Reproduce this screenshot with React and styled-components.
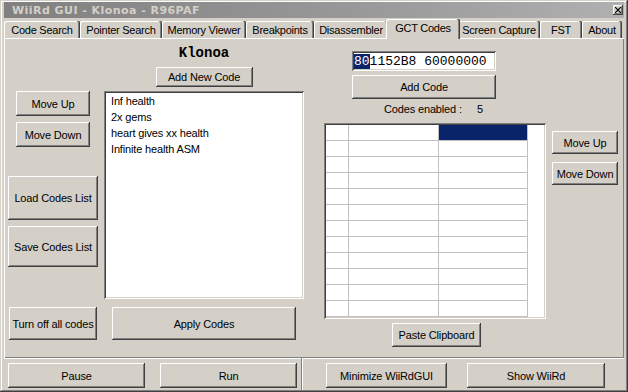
import React from 'react';
import styled, { createGlobalStyle } from 'styled-components';

const Global = createGlobalStyle`
  html, body { margin: 0; padding: 0; background: #d4d0c8; }
  body { font-family: "Liberation Sans", Arial, sans-serif; font-size: 11px; color: #000; }
  * { box-sizing: border-box; }
`;

const raised = `box-shadow: inset -1px -1px #404040, inset 1px 1px #ffffff, inset -2px -2px #808080;`;
const sunken = `box-shadow: inset 1px 1px #808080, inset -1px -1px #ffffff, inset 2px 2px #404040, inset -2px -2px #d4d0c8;`;

const Window = styled.div`
  width: 628px;
  height: 392px;
  padding: 2px 4px 2px 4px;
  background: #d4d0c8;
  display: flex;
  flex-direction: column;
  box-shadow: inset -1px -1px #404040, inset 1px 1px #d4d0c8, inset -2px -2px #808080, inset 2px 2px #ffffff;
`;

const TitleBar = styled.div`
  flex: none;
  height: 16px;
  display: flex;
  align-items: center;
  justify-content: space-between;
  padding: 0 1px 0 8px;
  background: linear-gradient(90deg, #808080 0%, #9a9a9a 60%, #b0b0b0 100%);
  color: #d4d0c8;
  font-family: "DejaVu Sans", Verdana, sans-serif;
  font-weight: bold;
  font-size: 11px;
  letter-spacing: 0.45px;
`;

const CloseBtn = styled.div`
  width: 10px;
  height: 10px;
  background: #d4d0c8;
  display: flex;
  align-items: center;
  justify-content: center;
  ${raised}
`;

const TabStrip = styled.div`
  flex: none;
  height: 20px;
  display: flex;
  align-items: flex-end;
  position: relative;
  z-index: 1;
`;

const Tab = styled.div`
  flex: none;
  width: ${p => p.$w}px;
  height: ${p => (p.$active ? 20 : 17)}px;
  margin: ${p => (p.$active ? '0 -2px -1px -2px' : '0')};
  position: relative;
  z-index: ${p => (p.$active ? 2 : 1)};
  background: #d4d0c8;
  border-top-left-radius: 2px;
  border-top-right-radius: 2px;
  box-shadow: inset -1px 0 #404040, inset -2px 0 #808080, inset 1px 1px #ffffff;
  display: flex;
  justify-content: center;
  align-items: ${p => (p.$active ? 'flex-start' : 'center')};
  padding-top: ${p => (p.$active ? 3 : 1)}px;
  font-size: 11px;
  letter-spacing: -0.25px;
  white-space: nowrap;
`;

const Panel = styled.div`
  flex: none;
  height: 320px;
  display: flex;
  padding-left: 4px;
  box-shadow: inset 1px 1px #ffffff, inset -1px -1px #808080;
`;

const LeftSection = styled.div`
  display: flex;
  gap: 6px;
`;

const Column = styled.div`
  width: ${p => p.$w}px;
  display: flex;
  flex-direction: column;
  align-items: center;
`;

const Button = styled.button`
  flex: none;
  width: ${p => p.$w}px;
  height: ${p => p.$h}px;
  margin-top: ${p => p.$mt || 0}px;
  margin-left: ${p => p.$ml || 0}px;
  padding: 0;
  border: 0;
  background: #d4d0c8;
  color: #000;
  font: 11px "Liberation Sans", Arial, sans-serif;
  letter-spacing: -0.15px;
  white-space: nowrap;
  ${raised}
`;

const GameTitle = styled.div`
  height: 20px;
  margin-top: 5px;
  line-height: 20px;
  font-family: "Liberation Mono", "Courier New", monospace;
  font-weight: bold;
  font-size: 14px;
`;

const ListBox = styled.div`
  width: 200px;
  height: 208px;
  margin-top: 4px;
  background: #fff;
  padding: 2px 0 0 7px;
  ${sunken}
`;

const ListItem = styled.div`
  height: 16px;
  line-height: 16px;
  font-size: 11px;
  letter-spacing: -0.15px;
`;

const RightSection = styled.div`
  margin-left: 20px;
  display: flex;
  flex-direction: column;
`;

const CodeEntry = styled.div`
  width: 144px;
  margin-left: 28px;
  margin-top: 13px;
  display: flex;
  flex-direction: column;
`;

const TextBox = styled.div`
  height: 20px;
  background: #fff;
  padding-left: 2px;
  display: flex;
  align-items: center;
  font-family: "Liberation Mono", "Courier New", monospace;
  font-size: 13px;
  white-space: pre;
  ${sunken}
`;

const Selected = styled.span`
  background: #0a246a;
  color: #fff;
`;

const EnabledLabel = styled.div`
  height: 16px;
  margin-top: 2px;
  padding-left: 32px;
  display: flex;
  align-items: center;
  gap: 15px;
  font-size: 11px;
  letter-spacing: -0.15px;
`;

const GridRow = styled.div`
  display: flex;
  margin-top: 6px;
`;

const GridBox = styled.div`
  width: 222px;
  height: 196px;
  padding: 2px;
  background: #fff;
  ${sunken}
`;

const Table = styled.div`
  display: grid;
  grid-template-columns: 23px 90px 89px;
  grid-auto-rows: 16px;
  width: 202px;
`;

const Cell = styled.div`
  border-right: 1px solid #c0c0c0;
  border-bottom: 1px solid #c0c0c0;
  background: ${p => (p.$sel ? '#0a246a' : '#fff')};
`;

const SideButtons = styled.div`
  margin-left: 6px;
  margin-top: 8px;
  display: flex;
  flex-direction: column;
`;

const BottomBar = styled.div`
  flex: none;
  height: 32px;
  display: flex;
`;

const BottomHalf = styled.div`
  width: ${p => (p.$w ? `${p.$w}px` : 'auto')};
  flex: ${p => (p.$w ? 'none' : '1')};
  display: flex;
  align-items: flex-start;
  padding-top: 5px;
  padding-left: ${p => p.$pl}px;
  gap: ${p => p.$gap}px;
  box-shadow: ${p => (p.$left ? 'inset -1px 0 #808080, inset 0 1px #ffffff' : 'inset 1px 0 #ffffff, inset 0 1px #ffffff')};
`;

const tabs = [
  ['Code Search', 76],
  ['Pointer Search', 82],
  ['Memory Viewer', 84],
  ['Breakpoints', 68],
  ['Disassembler', 74],
  ['GCT Codes', 74, true],
  ['Screen Capture', 82],
  ['FST', 42],
  ['About', 40],
];

const codes = ['Inf health', '2x gems', 'heart gives xx health', 'Infinite health ASM'];

export default function App() {
  const rows = Array.from({ length: 12 });
  return (
    <>
      <Global />
      <Window>
        <TitleBar>
          <span>WiiRd GUI - Klonoa - R96PAF</span>
          <CloseBtn>
            <svg width="6" height="6" viewBox="0 0 6 6">
              <path d="M0 0L6 6M6 0L0 6" stroke="#000" strokeWidth="1.2" />
            </svg>
          </CloseBtn>
        </TitleBar>
        <TabStrip>
          {tabs.map(([label, w, active]) => (
            <Tab key={label} $w={w} $active={active}>{label}</Tab>
          ))}
        </TabStrip>
        <Panel>
          <LeftSection>
            <Column $w={90}>
              <Button $w={74} $h={25} $mt={53}>Move Up</Button>
              <Button $w={74} $h={25} $mt={6}>Move Down</Button>
              <Button $w={90} $h={44} $mt={29}>Load Codes List</Button>
              <Button $w={90} $h={41} $mt={6}>Save Codes List</Button>
              <Button $w={88} $h={33} $mt={40}>Turn off all codes</Button>
            </Column>
            <Column $w={200}>
              <GameTitle>Klonoa</GameTitle>
              <Button $w={97} $h={20} $mt={4}>Add New Code</Button>
              <ListBox>
                {codes.map(c => <ListItem key={c}>{c}</ListItem>)}
              </ListBox>
              <Button $w={184} $h={33} $mt={8}>Apply Codes</Button>
            </Column>
          </LeftSection>
          <RightSection>
            <CodeEntry>
              <TextBox><Selected>80</Selected>1152B8 60000000</TextBox>
              <Button $w={144} $h={24} $mt={4}>Add Code</Button>
              <EnabledLabel><span>Codes enabled :</span><span>5</span></EnabledLabel>
            </CodeEntry>
            <GridRow>
              <GridBox>
                <Table>
                  {rows.map((_, r) => (
                    <React.Fragment key={r}>
                      <Cell />
                      <Cell />
                      <Cell $sel={r === 0} />
                    </React.Fragment>
                  ))}
                </Table>
              </GridBox>
              <SideButtons>
                <Button $w={66} $h={23}>Move Up</Button>
                <Button $w={66} $h={23} $mt={8}>Move Down</Button>
              </SideButtons>
            </GridRow>
            <Button $w={89} $h={24} $mt={4} $ml={68}>Paste Clipboard</Button>
          </RightSection>
        </Panel>
        <BottomBar>
          <BottomHalf $w={298} $pl={4} $gap={15} $left>
            <Button $w={137} $h={25}>Pause</Button>
            <Button $w={137} $h={25}>Run</Button>
          </BottomHalf>
          <BottomHalf $pl={24} $gap={20}>
            <Button $w={121} $h={25}>Minimize WiiRdGUI</Button>
            <Button $w={138} $h={25}>Show WiiRd</Button>
          </BottomHalf>
        </BottomBar>
      </Window>
    </>
  );
}
